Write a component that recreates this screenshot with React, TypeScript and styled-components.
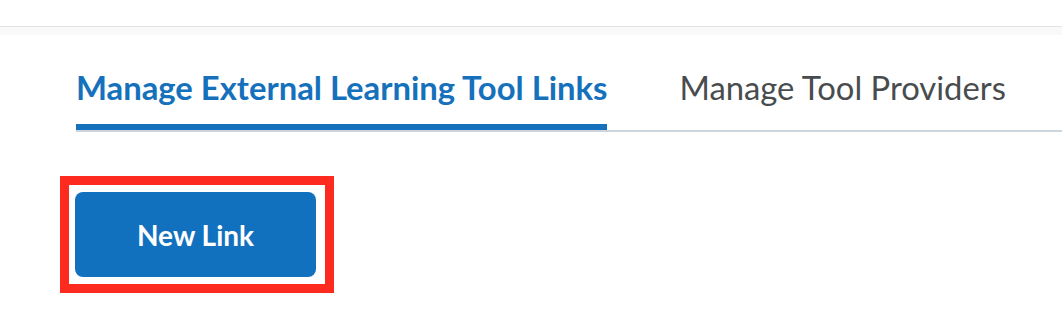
import React from 'react';
import styled, {createGlobalStyle} from "styled-components";

const GlobalStyle = createGlobalStyle`
    html, body {
        margin: 0;
        min-height: 100%;
        background: #fff;
        font-family: Lato, "Open Sans", sans-serif;
    }
    #root {
        min-height: 100vh;
    }
`

const tabs = [
    {label: 'Manage External Learning Tool Links', active: true},
    {label: 'Manage Tool Providers', active: false},
];

export default function App() {
    return (
        <>
            <GlobalStyle/>
            <TopBar/>
            <Band/>
            <Content>
                <TabList>
                    {tabs.map(t => (
                        <Tab key={t.label} $active={t.active}>{t.label}</Tab>
                    ))}
                </TabList>
                <Actions>
                    <Highlight>
                        <PrimaryButton>New Link</PrimaryButton>
                    </Highlight>
                </Actions>
            </Content>
        </>
    );
}

const TopBar = styled.div`
    height: 26px;
    background: #fff;
    border-bottom: 1px solid #e3e4e9;
`
const Band = styled.div`
    height: 8px;
    background: #f9f9f9;
`
const Content = styled.main`
    padding: 34px 0 0 60px;
`
const TabList = styled.div`
    display: flex;
    gap: 72px;
    margin-left: 16px;
    border-bottom: 2px solid #cdd5dc;
`
const Tab = styled.div<{ $active?: boolean }>`
    position: relative;
    font-size: 32.8px;
    line-height: 36px;
    padding-top: 1px;
    padding-bottom: 24px;
    font-weight: ${p => p.$active ? 700 : 400};
    color: ${p => p.$active ? '#1571bc' : '#494c4e'};
    white-space: nowrap;

    &::after {
        content: '';
        display: ${p => p.$active ? 'block' : 'none'};
        position: absolute;
        left: 0;
        right: 0;
        bottom: 0;
        height: 6px;
        background: #1571bc;
    }
`
const Actions = styled.div`
    display: flex;
    padding-top: 44px;
`
/* red annotation box drawn round the button */
const Highlight = styled.div`
    display: flex;
    padding: 7px 9px 7px 6px;
    border: 9px solid #fd2a20;
`
const PrimaryButton = styled.button`
    width: 241px;
    height: 85px;
    border: none;
    border-radius: 8px;
    background: #1271be;
    color: #fff;
    font-family: Lato, sans-serif;
    font-weight: 700;
    font-size: 28px;
    cursor: pointer;
`
